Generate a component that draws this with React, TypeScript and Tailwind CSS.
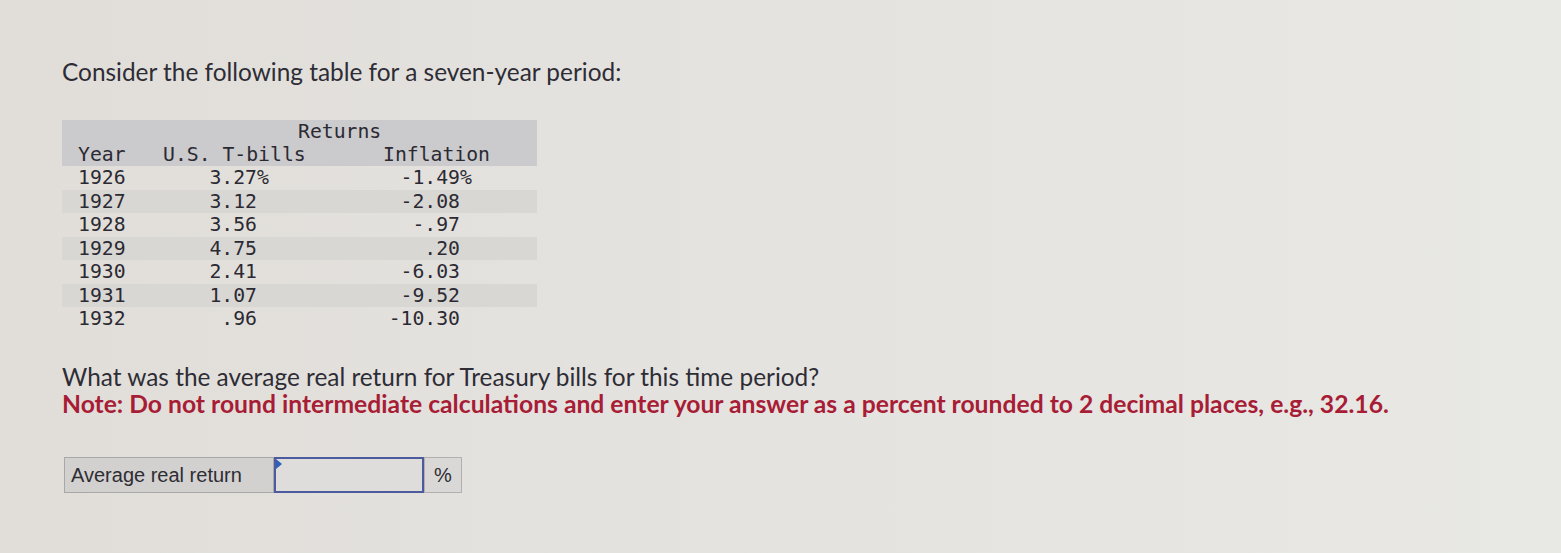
const rows: [string, string, boolean, string, boolean][] = [
  ["1926", "3.27", true, "-1.49", true],
  ["1927", "3.12", false, "-2.08", false],
  ["1928", "3.56", false, "-.97", false],
  ["1929", "4.75", false, ".20", false],
  ["1930", "2.41", false, "-6.03", false],
  ["1931", "1.07", false, "-9.52", false],
  ["1932", ".96", false, "-10.30", false],
];

function ReturnsTable() {
  return (
    <div className="w-[475px] font-['DejaVu_Sans_Mono',monospace] text-[19.75px] leading-[23.5px] text-[#2b2a33]">
      <div className="bg-[#cbcacc]">
        <div className="h-[23px] pl-[236px] leading-[23px]">Returns</div>
        <div className="flex h-[23px] pl-[16px] leading-[23px]">
          <span className="w-[85px]">Year</span>
          <span className="w-[220px]">U.S. T-bills</span>
          <span>Inflation</span>
        </div>
      </div>
      {rows.map(([year, tb, tbPct, inf, infPct], i) => (
        <div
          key={year}
          className={`flex h-[23.5px] pl-[16px] ${i % 2 === 1 ? "bg-[#d9d7d4]" : ""}`}
        >
          <span className="w-[85px]">{year}</span>
          <span className="w-[94px] text-right">{tb}</span>
          <span className="w-[12px]">{tbPct ? "%" : ""}</span>
          <span className="w-[191px] text-right">{inf}</span>
          <span className="w-[12px]">{infPct ? "%" : ""}</span>
        </div>
      ))}
    </div>
  );
}

export default function App() {
  return (
    <div className="h-[553px] w-[1561px] bg-gradient-to-r from-[#e1ded9] via-[#e5e3e0] to-[#e8e8e5] px-[62px] pt-[58px] font-['Lato',sans-serif] text-[#2e2d36]">
      <p className="text-[24.4px] leading-[28px]">
        Consider the following table for a seven-year period:
      </p>

      <div className="mt-[34px]">
        <ReturnsTable />
      </div>

      <div className="mt-[32px] text-[24.4px] leading-[27px]">
        <p>What was the average real return for Treasury bills for this time period?</p>
        <p className="text-[24.7px] font-bold text-[#a81d36]">
          Note: Do not round intermediate calculations and enter your answer as a percent
          rounded to 2 decimal places, e.g., 32.16.
        </p>
      </div>

      <div className="ml-[2px] mt-[40px] flex h-[36px] w-[398px] font-['Liberation_Sans',Arial,sans-serif] text-[20px] text-[#2e2d33]">
        <div className="flex w-[210px] items-center border border-[#a9a8a8] bg-[#d2d1d0] pl-[6px]">
          Average real return
        </div>
        <div className="relative w-[150px] border-2 border-[#4b5b9e] bg-[#dedddb]">
          <span className="absolute left-0 top-0 h-0 w-0 border-y-[5px] border-l-[6px] border-y-transparent border-l-[#2f5fb8]" />
        </div>
        <div className="flex w-[38px] items-center justify-center border border-[#b1b0af] bg-[#d9d8d6]">
          %
        </div>
      </div>
    </div>
  );
}
